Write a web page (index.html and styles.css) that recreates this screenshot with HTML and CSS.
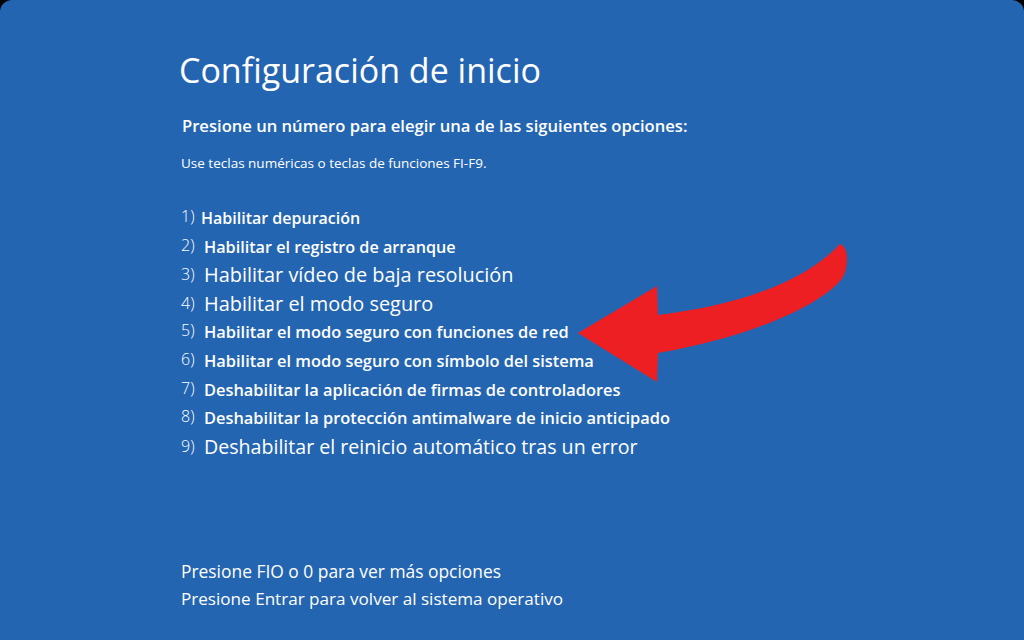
FILE: index.html
```html
<!DOCTYPE html>
<html lang="es">
<head>
<meta charset="utf-8">
<title>Configuración de inicio</title>
<link rel="stylesheet" href="styles.css">
</head>
<body>
<div class="screen">
  <div class="content">
    <h1 class="title">Configuración de inicio</h1>
    <p class="lead">Presione un número para elegir una de las siguientes opciones:</p>
    <p class="hint">Use teclas numéricas o teclas de funciones FI-F9.</p>
    <ol class="options">
      <li class="opt s1"><span class="num">1)</span><span class="txt">Habilitar depuración</span></li>
      <li class="opt s2"><span class="num">2)</span><span class="txt">Habilitar el registro de arranque</span></li>
      <li class="opt big"><span class="num">3)</span><span class="txt">Habilitar vídeo de baja resolución</span></li>
      <li class="opt big"><span class="num">4)</span><span class="txt">Habilitar el modo seguro</span></li>
      <li class="opt"><span class="num">5)</span><span class="txt">Habilitar el modo seguro con funciones de red</span></li>
      <li class="opt"><span class="num">6)</span><span class="txt">Habilitar el modo seguro con símbolo del sistema</span></li>
      <li class="opt"><span class="num">7)</span><span class="txt">Deshabilitar la aplicación de firmas de controladores</span></li>
      <li class="opt"><span class="num">8)</span><span class="txt">Deshabilitar la protección antimalware de inicio anticipado</span></li>
      <li class="opt big b9"><span class="num">9)</span><span class="txt">Deshabilitar el reinicio automático tras un error</span></li>
    </ol>
    <div class="footer">
      <p class="foot f1">Presione FIO o 0 para ver más opciones</p>
      <p class="foot">Presione Entrar para volver al sistema operativo</p>
    </div>
  </div>
  <svg class="arrow" width="1024" height="640" viewBox="0 0 1024 640" aria-hidden="true">
    <path d="M578,333 L657,286 L658,315 C725,307 800,287 840,244 Q847,247 847,258 Q847,270 843,277 C828,300 762,335 658,353 L657,382 Z" fill="#ee1f23"/>
  </svg>
</div>
</body>
</html>
```

FILE: styles.css
```css
html, body {
  margin: 0;
  padding: 0;
  background: #000;
}

.screen {
  position: relative;
  width: 1024px;
  height: 640px;
  background: #2465b2;
  border-radius: 12px 12px 0 0;
  overflow: hidden;
  color: #fff;
  font-family: "Open Sans", "Noto Sans", "Liberation Sans", sans-serif;
}

.content {
  padding: 50px 0 0 179px;
}

.title {
  margin: 0;
  font-size: 34px;
  font-weight: 400;
  line-height: 40px;
}

.lead {
  margin: 26px 0 0 3px;
  font-size: 16.6px;
  font-weight: 600;
  line-height: 20px;
}

.hint {
  margin: 19px 0 0 2px;
  font-size: 13.5px;
  font-weight: 400;
  line-height: 16px;
}

.options {
  list-style: none;
  margin: 33px 0 0 2px;
  padding: 0;
}

.opt {
  display: flex;
  align-items: baseline;
  height: 28.6px;
  line-height: 28.6px;
  font-size: 16.4px;
  font-weight: 600;
}

.opt.s1 {
  font-size: 16px;
}

.opt.s2 {
  font-size: 16.2px;
}

.opt.big {
  font-size: 19.9px;
  font-weight: 500;
}

.opt.b9 {
  font-size: 19.6px;
}

.num {
  width: 23px;
  font-size: 16px;
  font-weight: 300;
  position: relative;
  top: -2px;
}

.s1 .num {
  width: 20px;
}

.footer {
  margin-top: 96px;
}

.foot {
  margin: 0 0 0 2px;
  font-size: 17.1px;
  font-weight: 500;
  line-height: 28px;
}

.foot.f1 {
  font-size: 17.4px;
}

.arrow {
  position: absolute;
  left: 0;
  top: 0;
}
```
